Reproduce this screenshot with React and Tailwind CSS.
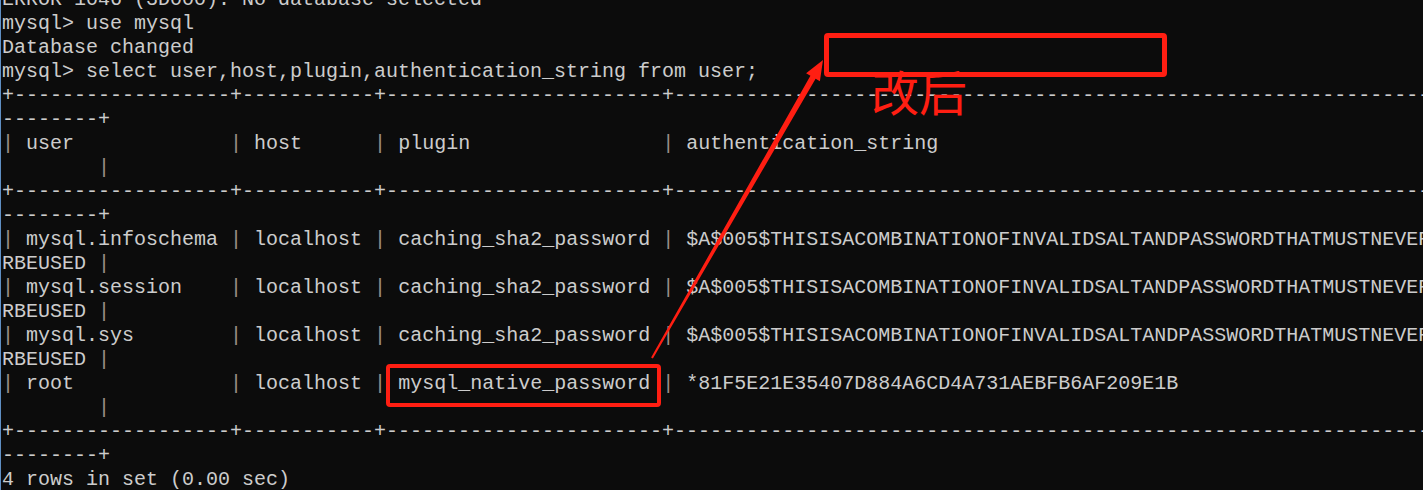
import React from 'react'

const COLS = 120
const widths = [16, 9, 21, 70]

const pad = (s, n) => s + ' '.repeat(Math.max(0, n - s.length))
const border = '+' + widths.map((w) => '-'.repeat(w + 2)).join('+') + '+'
const row = (cells) => '|' + cells.map((c, i) => ' ' + pad(c, widths[i]) + ' ').join('|') + '|'

const SALT = '$A$005$THISISACOMBINATIONOFINVALIDSALTANDPASSWORDTHATMUSTNEVERBRBEUSED'

const logical = [
  'ERROR 1046 (3D000): No database selected',
  'mysql> use mysql',
  'Database changed',
  'mysql> select user,host,plugin,authentication_string from user;',
  border,
  row(['user', 'host', 'plugin', 'authentication_string']),
  border,
  row(['mysql.infoschema', 'localhost', 'caching_sha2_password', SALT]),
  row(['mysql.session', 'localhost', 'caching_sha2_password', SALT]),
  row(['mysql.sys', 'localhost', 'caching_sha2_password', SALT]),
  row(['root', 'localhost', 'mysql_native_password', '*81F5E21E35407D884A6CD4A731AEBFB6AF209E1B']),
  border,
  '4 rows in set (0.00 sec)',
]

// wrap every line at the console width, like the windows terminal does
const lines = logical.flatMap((l) => {
  const out = []
  for (let i = 0; i < l.length; i += COLS) out.push(l.slice(i, i + COLS))
  return out.length ? out : ['']
})

function Line({ text }) {
  const parts = text.split('|')
  return (
    <div className="whitespace-pre h-[24px]">
      {parts.map((p, i) => (
        <React.Fragment key={i}>
          {i > 0 && <span className="text-[#9a8f86]">|</span>}
          {p}
        </React.Fragment>
      ))}
    </div>
  )
}

export default function App() {
  return (
    <div className="relative w-[1423px] h-[490px] overflow-hidden bg-[#0c0c0c] border-l border-[#5f8fc4]">
      <div
        className="-mt-[12px] pl-[1px] text-[20px] leading-[24px] text-[#cccccc]"
        style={{ fontFamily: '"Liberation Mono", "DejaVu Sans Mono", monospace' }}
      >
        {lines.map((l, i) => (
          <Line key={i} text={l} />
        ))}
      </div>

      {/* annotations */}
      <div className="absolute left-[823px] top-[33px] w-[343px] h-[44px] border-[5px] border-[#ff1e12] rounded-[4px]" />
      <div className="absolute left-[385px] top-[364px] w-[275px] h-[43px] border-[4px] border-[#ff1e12] rounded-[4px]" />
      <span
        className="absolute left-[870px] top-[66px] text-[48px] leading-none text-[#ff1e12]"
        style={{ fontFamily: '"Noto Sans CJK SC", sans-serif' }}
      >
        改后
      </span>
      <svg className="absolute inset-0 pointer-events-none" width="1423" height="490">
        <polygon
          fill="#ff1e12"
          points="650.1,357.5 651.9,358.5 814.6,78.8 818.9,81.3 822,60 805.1,73.3 809.4,75.8"
        />
      </svg>
    </div>
  )
}
